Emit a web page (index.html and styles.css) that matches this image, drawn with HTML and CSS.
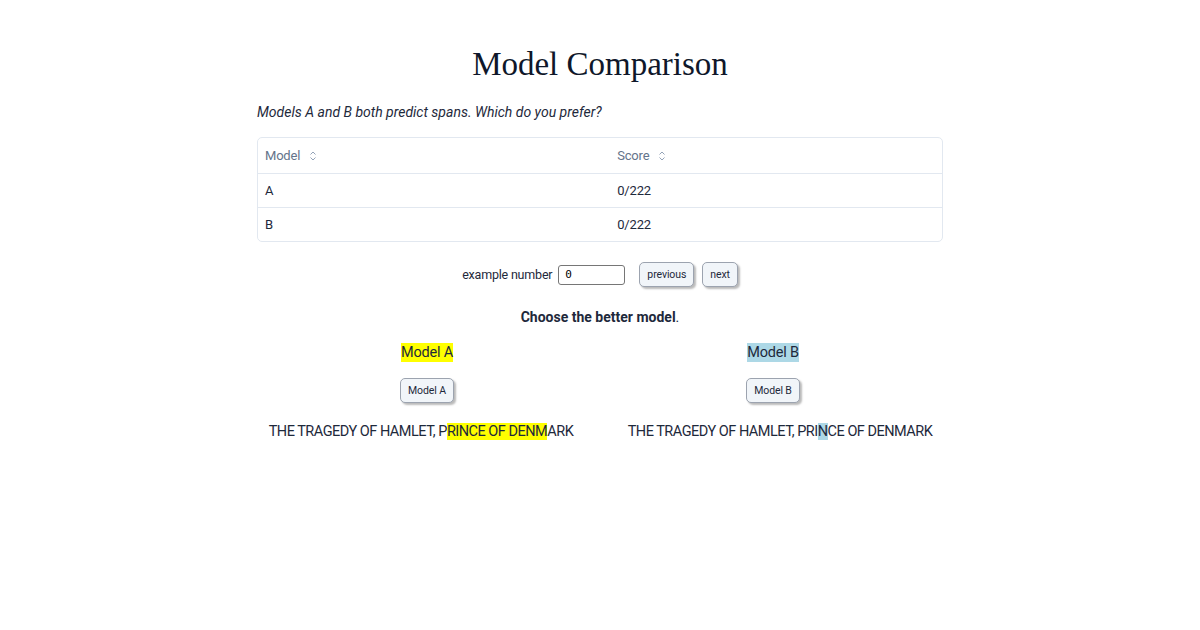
FILE: index.html
```html
<!DOCTYPE html>
<html lang="en">

<head>
    <meta charset="UTF-8">
    <title>Model Comparison</title>
    <link rel="stylesheet" href="styles.css">
</head>

<body>
    <div class="page">
        <h1>Model Comparison</h1>
        <p class="intro">Models A and B both predict spans. Which do you prefer?</p>

        <div class="tableBox">
            <table>
                <thead>
                    <tr>
                        <th class="first">Model <span class="sort">
                                <svg width="8" height="10" viewBox="0 0 8 10"><path d="M1.5 3.5 L4 1 L6.5 3.5 M1.5 6.5 L4 9 L6.5 6.5" fill="none" stroke="#94a3b8" stroke-width="1"/></svg>
                            </span></th>
                        <th>Score <span class="sort">
                                <svg width="8" height="10" viewBox="0 0 8 10"><path d="M1.5 3.5 L4 1 L6.5 3.5 M1.5 6.5 L4 9 L6.5 6.5" fill="none" stroke="#94a3b8" stroke-width="1"/></svg>
                            </span></th>
                    </tr>
                </thead>
                <tbody>
                    <tr>
                        <td>A</td>
                        <td>0/222</td>
                    </tr>
                    <tr>
                        <td>B</td>
                        <td>0/222</td>
                    </tr>
                </tbody>
            </table>
        </div>

        <div class="controls">
            <label for="num">example number</label>
            <input type="text" id="num" value="0">
            <button class="btn">previous</button>
            <button class="btn">next</button>
        </div>

        <p class="choose"><b>Choose the better model</b>.</p>

        <div class="compare">
            <div class="col colA">
                <span class="label hlA">Model A</span>
                <button class="btn">Model A</button>
                <p class="text">THE TRAGEDY OF HAMLET, P<span class="hlA">RINCE OF DENM</span>ARK</p>
            </div>
            <div class="col colB">
                <span class="label hlB">Model B</span>
                <button class="btn">Model B</button>
                <p class="text">THE TRAGEDY OF HAMLET, PRI<span class="hlB">N</span>CE OF DENMARK</p>
            </div>
        </div>
    </div>
</body>

</html>
```

FILE: styles.css
```css
* {
    margin: 0;
    padding: 0;
    box-sizing: border-box;
}

body {
    font-family: "Roboto", sans-serif;
    color: #1e293b;
    background: #fff;
}

.page {
    width: 686px;
    margin: 0 auto;
    padding-top: 44px;
}

h1 {
    font-family: "Liberation Serif", serif;
    font-weight: normal;
    font-size: 33px;
    line-height: 40px;
    text-align: center;
    color: #0f172a;
}

.intro {
    margin-top: 19px;
    font-style: italic;
    font-size: 14px;
    line-height: 18px;
}

.tableBox {
    margin-top: 16px;
    border: 1px solid #e2e8f0;
    border-radius: 5px;
    overflow: hidden;
}

table {
    width: 100%;
    border-collapse: collapse;
    font-size: 13px;
    letter-spacing: -0.2px;
}

th,
td {
    text-align: left;
    padding: 0 7px;
}

th.first {
    width: 51.5%;
}

th {
    font-weight: normal;
    color: #64748b;
    height: 35px;
    padding-top: 2px;
    border-bottom: 1px solid #e2e8f0;
}

td {
    height: 34px;
}

tbody tr + tr td {
    border-top: 1px solid #e2e8f0;
}

.sort {
    margin-left: 6px;
    vertical-align: middle;
}

.controls {
    margin-top: 20px;
    display: flex;
    justify-content: center;
    align-items: center;
    font-size: 12.5px;
    letter-spacing: -0.2px;
}

.controls input {
    width: 67px;
    height: 20px;
    margin-left: 6px;
    margin-right: 14px;
    border: 1px solid #767676;
    border-radius: 3px;
    padding: 0 6px;
    font-family: "DejaVu Sans Mono", monospace;
    font-size: 11px;
}

.btn {
    font-family: inherit;
    font-size: 10.5px;
    letter-spacing: -0.1px;
    color: #1e293b;
    background: #f1f5f9;
    border: 1px solid #9ca3af;
    border-radius: 5px;
    height: 25px;
    padding: 0 7px;
    box-shadow: 2px 2px 2px #bbb;
    cursor: pointer;
}

.controls .btn + .btn {
    margin-left: 8px;
}

.choose {
    margin-top: 20px;
    text-align: center;
    font-size: 14px;
    line-height: 20px;
}

.compare {
    margin-top: 16px;
    display: flex;
}

.col {
    flex: 1;
    min-width: 0;
    display: flex;
    flex-direction: column;
    align-items: center;
}

.colA {
    padding-right: 4px;
}

.colB {
    padding-left: 2px;
}

.label {
    font-size: 14.5px;
    letter-spacing: -0.2px;
    line-height: 19px;
}

.hlA {
    background: yellow;
}

.hlB {
    background: lightblue;
}

.col .btn {
    margin-top: 16px;
}

.text {
    margin-top: 19px;
    font-size: 14.5px;
    letter-spacing: -0.5px;
    line-height: 19px;
    white-space: nowrap;
}

.colA .text {
    margin-right: 12px;
}

.colB .text {
    margin-left: 14px;
}
```
